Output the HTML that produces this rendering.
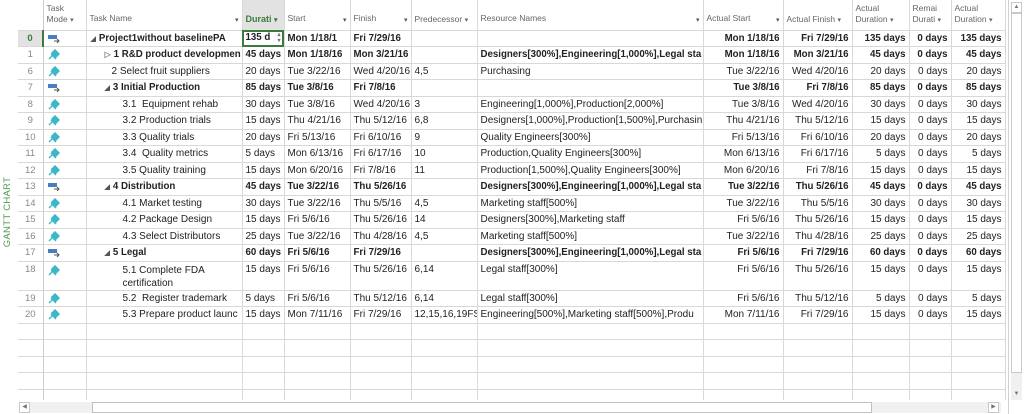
<!DOCTYPE html>
<html><head><meta charset="utf-8">
<style>
*{margin:0;padding:0;box-sizing:border-box}
body{width:1024px;height:414px;background:#fff;overflow:hidden;position:relative;font-family:"Liberation Sans",Arial,sans-serif;font-size:10px;color:#222}
table{position:absolute;left:18px;top:0;border-collapse:collapse;table-layout:fixed;width:987px}
td,th{border-right:1px solid #d8d8d8;border-bottom:1px solid #d8d8d8;white-space:nowrap;overflow:hidden;padding:0 3px;height:16.5px;vertical-align:middle}
th{font-weight:normal;color:#666;font-size:8.5px;height:30px;vertical-align:bottom;padding-bottom:4px;text-align:left;border-bottom:1px solid #d8d8d8;line-height:11px}
th .dd{float:right;font-size:7px;color:#555;margin-top:2px}
td.n{color:#888;text-align:center;font-size:9.5px;border-right:1px solid #ccc}
td.m{padding-left:4px;line-height:0}
td svg{vertical-align:middle}
tr.b td{font-weight:bold;font-size:9.7px}
tr.b td.n{font-weight:normal;font-size:9.5px}
td.r{text-align:right}
.i1{padding-left:25px}
.i2{padding-left:36px}
.i0{padding-left:4px}
.tri{font-size:7px;color:#555;margin-right:3px}
.gl{position:absolute;left:-32px;top:206px;width:80px;height:12px;line-height:12px;white-space:nowrap;transform:rotate(-90deg);color:#4f9a4f;font-size:9.5px;text-align:center;letter-spacing:0.3px}
</style></head><body>
<div class="gl">GANTT CHART</div>
<table>
<colgroup>
<col style="width:25px"><col style="width:43px"><col style="width:156px"><col style="width:42px"><col style="width:66px"><col style="width:61px"><col style="width:66px"><col style="width:226px"><col style="width:80px"><col style="width:69px"><col style="width:57px"><col style="width:42px"><col style="width:54px">
</colgroup>
<tr>
<th style="border-right:1px solid #ccc"></th>
<th>Task<br>Mode <span style="font-size:7px">▾</span></th>
<th>Task Name<span class="dd">▾</span></th>
<th style="background:#e2e2e2;color:#3d7a3d;font-weight:bold;font-size:9px">Durati <span style="font-size:7px">▾</span></th>
<th>Start<span class="dd">▾</span></th>
<th>Finish<span class="dd">▾</span></th>
<th>Predecessor <span style="font-size:7px">▾</span></th>
<th>Resource Names<span class="dd">▾</span></th>
<th>Actual Start<span class="dd">▾</span></th>
<th>Actual Finish <span style="font-size:7px">▾</span></th>
<th>Actual<br>Duration <span style="font-size:7px">▾</span></th>
<th>Remai<br>Durati <span style="font-size:7px">▾</span></th>
<th>Actual<br>Duration <span style="font-size:7px">▾</span></th>
</tr>
<tr class="b"><td class="n" style="background:#e2e2e2;color:#3d7a3d;font-weight:bold">0</td><td class="m" style="border-left:2px solid #3d7a3d"><svg width="12" height="9"><rect x="0" y="1" width="9" height="4" fill="#4a7cc0"/><path d="M6 7h5M9 5l2 2-2 2" stroke="#555" fill="none" stroke-width="1"/></svg></td><td class="i0"><span class="tri">◢</span>Project1without baselinePA</td><td style="outline:2px solid #3d7a3d;outline-offset:-2px">135 d <span style="float:right;font-size:6px;color:#777;line-height:6px">▴<br>▾</span></td><td>Mon 1/18/1</td><td>Fri 7/29/16</td><td></td><td></td><td class="r">Mon 1/18/16</td><td class="r">Fri 7/29/16</td><td class="r">135 days</td><td class="r">0 days</td><td class="r">135 days</td></tr>
<tr class="b"><td class="n">1</td><td class="m"><svg width="12" height="11"><path d="M1 10l4-4" stroke="#3bb8c8" stroke-width="1.3"/><path d="M4 4l3-3 4 4-3 3z M3 5l5 5" stroke="#3bb8c8" fill="#3bb8c8" stroke-width="1.5"/></svg></td><td class="i1" style="padding-left:18px"><span class="tri" style="font-size:8px;color:#888">▷</span>1 R&amp;D product developmen</td><td>45 days</td><td>Mon 1/18/16</td><td>Mon 3/21/16</td><td></td><td>Designers[300%],Engineering[1,000%],Legal sta</td><td class="r">Mon 1/18/16</td><td class="r">Mon 3/21/16</td><td class="r">45 days</td><td class="r">0 days</td><td class="r">45 days</td></tr>
<tr><td class="n">6</td><td class="m"><svg width="12" height="11"><path d="M1 10l4-4" stroke="#3bb8c8" stroke-width="1.3"/><path d="M4 4l3-3 4 4-3 3z M3 5l5 5" stroke="#3bb8c8" fill="#3bb8c8" stroke-width="1.5"/></svg></td><td class="i1">2 Select fruit suppliers</td><td>20 days</td><td>Tue 3/22/16</td><td>Wed 4/20/16</td><td>4,5</td><td>Purchasing</td><td class="r">Tue 3/22/16</td><td class="r">Wed 4/20/16</td><td class="r">20 days</td><td class="r">0 days</td><td class="r">20 days</td></tr>
<tr class="b"><td class="n">7</td><td class="m"><svg width="12" height="9"><rect x="0" y="1" width="9" height="4" fill="#4a7cc0"/><path d="M6 7h5M9 5l2 2-2 2" stroke="#555" fill="none" stroke-width="1"/></svg></td><td class="i1" style="padding-left:18px"><span class="tri">◢</span>3 Initial Production</td><td>85 days</td><td>Tue 3/8/16</td><td>Fri 7/8/16</td><td></td><td></td><td class="r">Tue 3/8/16</td><td class="r">Fri 7/8/16</td><td class="r">85 days</td><td class="r">0 days</td><td class="r">85 days</td></tr>
<tr><td class="n">8</td><td class="m"><svg width="12" height="11"><path d="M1 10l4-4" stroke="#3bb8c8" stroke-width="1.3"/><path d="M4 4l3-3 4 4-3 3z M3 5l5 5" stroke="#3bb8c8" fill="#3bb8c8" stroke-width="1.5"/></svg></td><td class="i2">3.1&nbsp; Equipment rehab</td><td>30 days</td><td>Tue 3/8/16</td><td>Wed 4/20/16</td><td>3</td><td>Engineering[1,000%],Production[2,000%]</td><td class="r">Tue 3/8/16</td><td class="r">Wed 4/20/16</td><td class="r">30 days</td><td class="r">0 days</td><td class="r">30 days</td></tr>
<tr><td class="n">9</td><td class="m"><svg width="12" height="11"><path d="M1 10l4-4" stroke="#3bb8c8" stroke-width="1.3"/><path d="M4 4l3-3 4 4-3 3z M3 5l5 5" stroke="#3bb8c8" fill="#3bb8c8" stroke-width="1.5"/></svg></td><td class="i2">3.2 Production trials</td><td>15 days</td><td>Thu 4/21/16</td><td>Thu 5/12/16</td><td>6,8</td><td>Designers[1,000%],Production[1,500%],Purchasin</td><td class="r">Thu 4/21/16</td><td class="r">Thu 5/12/16</td><td class="r">15 days</td><td class="r">0 days</td><td class="r">15 days</td></tr>
<tr><td class="n">10</td><td class="m"><svg width="12" height="11"><path d="M1 10l4-4" stroke="#3bb8c8" stroke-width="1.3"/><path d="M4 4l3-3 4 4-3 3z M3 5l5 5" stroke="#3bb8c8" fill="#3bb8c8" stroke-width="1.5"/></svg></td><td class="i2">3.3 Quality trials</td><td>20 days</td><td>Fri 5/13/16</td><td>Fri 6/10/16</td><td>9</td><td>Quality Engineers[300%]</td><td class="r">Fri 5/13/16</td><td class="r">Fri 6/10/16</td><td class="r">20 days</td><td class="r">0 days</td><td class="r">20 days</td></tr>
<tr><td class="n">11</td><td class="m"><svg width="12" height="11"><path d="M1 10l4-4" stroke="#3bb8c8" stroke-width="1.3"/><path d="M4 4l3-3 4 4-3 3z M3 5l5 5" stroke="#3bb8c8" fill="#3bb8c8" stroke-width="1.5"/></svg></td><td class="i2">3.4&nbsp; Quality metrics</td><td>5 days</td><td>Mon 6/13/16</td><td>Fri 6/17/16</td><td>10</td><td>Production,Quality Engineers[300%]</td><td class="r">Mon 6/13/16</td><td class="r">Fri 6/17/16</td><td class="r">5 days</td><td class="r">0 days</td><td class="r">5 days</td></tr>
<tr><td class="n">12</td><td class="m"><svg width="12" height="11"><path d="M1 10l4-4" stroke="#3bb8c8" stroke-width="1.3"/><path d="M4 4l3-3 4 4-3 3z M3 5l5 5" stroke="#3bb8c8" fill="#3bb8c8" stroke-width="1.5"/></svg></td><td class="i2">3.5 Quality training</td><td>15 days</td><td>Mon 6/20/16</td><td>Fri 7/8/16</td><td>11</td><td>Production[1,500%],Quality Engineers[300%]</td><td class="r">Mon 6/20/16</td><td class="r">Fri 7/8/16</td><td class="r">15 days</td><td class="r">0 days</td><td class="r">15 days</td></tr>
<tr class="b"><td class="n">13</td><td class="m"><svg width="12" height="9"><rect x="0" y="1" width="9" height="4" fill="#4a7cc0"/><path d="M6 7h5M9 5l2 2-2 2" stroke="#555" fill="none" stroke-width="1"/></svg></td><td class="i1" style="padding-left:18px"><span class="tri">◢</span>4 Distribution</td><td>45 days</td><td>Tue 3/22/16</td><td>Thu 5/26/16</td><td></td><td>Designers[300%],Engineering[1,000%],Legal sta</td><td class="r">Tue 3/22/16</td><td class="r">Thu 5/26/16</td><td class="r">45 days</td><td class="r">0 days</td><td class="r">45 days</td></tr>
<tr><td class="n">14</td><td class="m"><svg width="12" height="11"><path d="M1 10l4-4" stroke="#3bb8c8" stroke-width="1.3"/><path d="M4 4l3-3 4 4-3 3z M3 5l5 5" stroke="#3bb8c8" fill="#3bb8c8" stroke-width="1.5"/></svg></td><td class="i2">4.1 Market testing</td><td>30 days</td><td>Tue 3/22/16</td><td>Thu 5/5/16</td><td>4,5</td><td>Marketing staff[500%]</td><td class="r">Tue 3/22/16</td><td class="r">Thu 5/5/16</td><td class="r">30 days</td><td class="r">0 days</td><td class="r">30 days</td></tr>
<tr><td class="n">15</td><td class="m"><svg width="12" height="11"><path d="M1 10l4-4" stroke="#3bb8c8" stroke-width="1.3"/><path d="M4 4l3-3 4 4-3 3z M3 5l5 5" stroke="#3bb8c8" fill="#3bb8c8" stroke-width="1.5"/></svg></td><td class="i2">4.2 Package Design</td><td>15 days</td><td>Fri 5/6/16</td><td>Thu 5/26/16</td><td>14</td><td>Designers[300%],Marketing staff</td><td class="r">Fri 5/6/16</td><td class="r">Thu 5/26/16</td><td class="r">15 days</td><td class="r">0 days</td><td class="r">15 days</td></tr>
<tr><td class="n">16</td><td class="m"><svg width="12" height="11"><path d="M1 10l4-4" stroke="#3bb8c8" stroke-width="1.3"/><path d="M4 4l3-3 4 4-3 3z M3 5l5 5" stroke="#3bb8c8" fill="#3bb8c8" stroke-width="1.5"/></svg></td><td class="i2">4.3 Select Distributors</td><td>25 days</td><td>Tue 3/22/16</td><td>Thu 4/28/16</td><td>4,5</td><td>Marketing staff[500%]</td><td class="r">Tue 3/22/16</td><td class="r">Thu 4/28/16</td><td class="r">25 days</td><td class="r">0 days</td><td class="r">25 days</td></tr>
<tr class="b"><td class="n">17</td><td class="m"><svg width="12" height="9"><rect x="0" y="1" width="9" height="4" fill="#4a7cc0"/><path d="M6 7h5M9 5l2 2-2 2" stroke="#555" fill="none" stroke-width="1"/></svg></td><td class="i1" style="padding-left:18px"><span class="tri">◢</span>5 Legal</td><td>60 days</td><td>Fri 5/6/16</td><td>Fri 7/29/16</td><td></td><td>Designers[300%],Engineering[1,000%],Legal sta</td><td class="r">Fri 5/6/16</td><td class="r">Fri 7/29/16</td><td class="r">60 days</td><td class="r">0 days</td><td class="r">60 days</td></tr>
<tr style="vertical-align:top"><td class="n" style="height:29px;vertical-align:top;padding-top:2px">18</td><td class="m" style="vertical-align:top;padding-top:3px"><svg width="12" height="11"><path d="M1 10l4-4" stroke="#3bb8c8" stroke-width="1.3"/><path d="M4 4l3-3 4 4-3 3z M3 5l5 5" stroke="#3bb8c8" fill="#3bb8c8" stroke-width="1.5"/></svg></td><td class="i2" style="vertical-align:top;padding-top:2px;white-space:normal;line-height:13px">5.1 Complete FDA certification</td><td style="vertical-align:top;padding-top:2px">15 days</td><td style="vertical-align:top;padding-top:2px">Fri 5/6/16</td><td style="vertical-align:top;padding-top:2px">Thu 5/26/16</td><td style="vertical-align:top;padding-top:2px">6,14</td><td style="vertical-align:top;padding-top:2px">Legal staff[300%]</td><td class="r" style="vertical-align:top;padding-top:2px">Fri 5/6/16</td><td class="r" style="vertical-align:top;padding-top:2px">Thu 5/26/16</td><td class="r" style="vertical-align:top;padding-top:2px">15 days</td><td class="r" style="vertical-align:top;padding-top:2px">0 days</td><td class="r" style="vertical-align:top;padding-top:2px">15 days</td></tr>
<tr><td class="n">19</td><td class="m"><svg width="12" height="11"><path d="M1 10l4-4" stroke="#3bb8c8" stroke-width="1.3"/><path d="M4 4l3-3 4 4-3 3z M3 5l5 5" stroke="#3bb8c8" fill="#3bb8c8" stroke-width="1.5"/></svg></td><td class="i2">5.2&nbsp; Register trademark</td><td>5 days</td><td>Fri 5/6/16</td><td>Thu 5/12/16</td><td>6,14</td><td>Legal staff[300%]</td><td class="r">Fri 5/6/16</td><td class="r">Thu 5/12/16</td><td class="r">5 days</td><td class="r">0 days</td><td class="r">5 days</td></tr>
<tr><td class="n">20</td><td class="m"><svg width="12" height="11"><path d="M1 10l4-4" stroke="#3bb8c8" stroke-width="1.3"/><path d="M4 4l3-3 4 4-3 3z M3 5l5 5" stroke="#3bb8c8" fill="#3bb8c8" stroke-width="1.5"/></svg></td><td class="i2">5.3 Prepare product launc</td><td>15 days</td><td>Mon 7/11/16</td><td>Fri 7/29/16</td><td>12,15,16,19FS</td><td>Engineering[500%],Marketing staff[500%],Produ</td><td class="r">Mon 7/11/16</td><td class="r">Fri 7/29/16</td><td class="r">15 days</td><td class="r">0 days</td><td class="r">15 days</td></tr>
<tr><td class="n"></td><td></td><td></td><td></td><td></td><td></td><td></td><td></td><td></td><td></td><td></td><td></td><td></td></tr>
<tr><td class="n"></td><td></td><td></td><td></td><td></td><td></td><td></td><td></td><td></td><td></td><td></td><td></td><td></td></tr>
<tr><td class="n"></td><td></td><td></td><td></td><td></td><td></td><td></td><td></td><td></td><td></td><td></td><td></td><td></td></tr>
<tr><td class="n"></td><td></td><td></td><td></td><td></td><td></td><td></td><td></td><td></td><td></td><td></td><td></td><td></td></tr>
<tr><td class="n" style="border-bottom:none;height:9px"></td><td style="border-bottom:none;height:9px"></td><td style="border-bottom:none"></td><td style="border-bottom:none"></td><td style="border-bottom:none"></td><td style="border-bottom:none"></td><td style="border-bottom:none"></td><td style="border-bottom:none"></td><td style="border-bottom:none"></td><td style="border-bottom:none"></td><td style="border-bottom:none"></td><td style="border-bottom:none"></td><td style="border-bottom:none"></td></tr>
</table>
<div style="position:absolute;left:1008px;top:0;width:1px;height:414px;background:#d0d0d0"></div>
<div style="position:absolute;left:1011px;top:2px;width:11px;height:398px;background:#f0f0f0"></div>
<div style="position:absolute;left:1011px;top:2px;width:11px;height:11px;border:1px solid #c8c8c8;background:#fff;font-size:6px;color:#777;text-align:center;line-height:9px">▲</div>
<div style="position:absolute;left:1011px;top:13px;width:11px;height:360px;border:1px solid #c8c8c8;background:#fff"></div>
<div style="position:absolute;left:1011px;top:389px;width:11px;height:11px;font-size:6px;color:#777;text-align:center;line-height:11px">▼</div>
<div style="position:absolute;left:18px;top:400px;width:990px;height:14px;background:#fff"></div>
<div style="position:absolute;left:19px;top:402px;width:982px;height:11px;background:#f0f0f0"></div>
<div style="position:absolute;left:19px;top:402px;width:11px;height:11px;border:1px solid #c8c8c8;background:#fff;font-size:6px;color:#777;text-align:center;line-height:9px">◀</div>
<div style="position:absolute;left:92px;top:402px;width:780px;height:11px;border:1px solid #c0c0c0;background:#fff"></div>
<div style="position:absolute;left:988px;top:402px;width:11px;height:11px;border:1px solid #c8c8c8;background:#fff;font-size:6px;color:#777;text-align:center;line-height:9px">▶</div>
</body></html>
